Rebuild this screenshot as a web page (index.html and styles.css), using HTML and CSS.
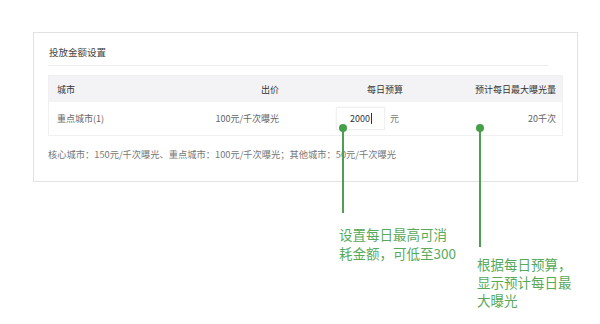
FILE: index.html
```html
<!DOCTYPE html>
<html>
<head>
    <title>投放金额设置</title>
    <link rel="stylesheet" href="styles.css">
</head>
<body>
    <div class="page">
        <div class="card">
            <div class="card-title">投放金额设置</div>

            <div class="table">
                <div class="row head">
                    <div class="cell">城市</div>
                    <div class="cell right">出价</div>
                    <div class="cell right">每日预算</div>
                    <div class="cell right">预计每日最大曝光量</div>
                </div>
                <div class="row body">
                    <div class="cell">重点城市(1)</div>
                    <div class="cell right">100元/千次曝光</div>
                    <div class="cell right budget">
                        <span class="budget-input">2000<span class="caret"></span></span>
                        <span class="unit">元</span>
                    </div>
                    <div class="cell right">20千次</div>
                </div>
            </div>

            <div class="note">核心城市：150元/千次曝光、重点城市：100元/千次曝光；其他城市：50元/千次曝光</div>
        </div>

        <!-- callouts -->
        <div class="pin pin-budget"></div>
        <div class="pin pin-exposure"></div>
        <div class="tip tip-budget">设置每日最高可消<br>耗金额，可低至300</div>
        <div class="tip tip-exposure">根据每日预算，<br>显示预计每日最<br>大曝光</div>
    </div>
</body>
</html>
```

FILE: styles.css
```css
body {
    margin: 0;
    background: #fff;
    font-family: "Noto Sans CJK SC", "Noto Sans", sans-serif;
}
.page {
    position: relative;
    width: 600px;
    height: 324px;
    padding: 32px 0 0 33px;
    box-sizing: border-box;
}
.card {
    width: 545px;
    height: 150px;
    box-sizing: border-box;
    border: 1px solid #e2e2e4;
    padding: 10px 14px 0 14px;
    background: #fff;
}
.card-title {
    font-size: 9.5px;
    line-height: 14px;
    color: #444;
    padding: 2px 0 6px 1px;
    border-bottom: 1px solid #ececee;
    margin-right: 15px;
}
.table {
    margin-top: 9px;
    width: 515px;
    border: 1px solid #f0f0f2;
    box-sizing: border-box;
}
.row {
    display: grid;
    grid-template-columns: 122px 100px 124px 153px;
    padding: 0 8px;
    align-items: center;
    font-size: 9px;
}
.row.head {
    height: 26px;
    background: #f3f3f5;
    color: #333;
}
.row.body {
    height: 33px;
    color: #666;
}
.cell.right {
    text-align: right;
}
.budget {
    display: flex;
    justify-content: flex-end;
    align-items: center;
    padding-right: 4px;
}
.budget-input {
    display: inline-flex;
    align-items: center;
    width: 49px;
    height: 23px;
    box-sizing: border-box;
    padding-left: 13px;
    border: 1px solid #f0f0f0;
    box-shadow: 0 0 2px rgba(0, 0, 0, 0.06);
    color: #333;
}
.caret {
    display: inline-block;
    width: 1px;
    height: 11px;
    background: #333;
    margin-left: 1px;
}
.unit {
    margin-left: 5px;
    color: #777;
}
.note {
    margin-top: 11px;
    font-size: 9.25px;
    color: #777;
}
.pin {
    position: absolute;
    width: 2px;
    background: #4f9f52;
}
.pin::before {
    content: "";
    position: absolute;
    left: -3px;
    top: -3px;
    width: 8px;
    height: 8px;
    border-radius: 50%;
    background: #45a049;
}
.pin-budget {
    left: 342px;
    top: 127px;
    height: 86px;
}
.pin-exposure {
    left: 479px;
    top: 127px;
    height: 120px;
}
.tip {
    position: absolute;
    font-size: 13.5px;
    line-height: 19px;
    color: #58a95a;
}
.tip-budget {
    left: 339px;
    top: 225px;
}
.tip-exposure {
    left: 477px;
    top: 255px;
    line-height: 18px;
}
```
